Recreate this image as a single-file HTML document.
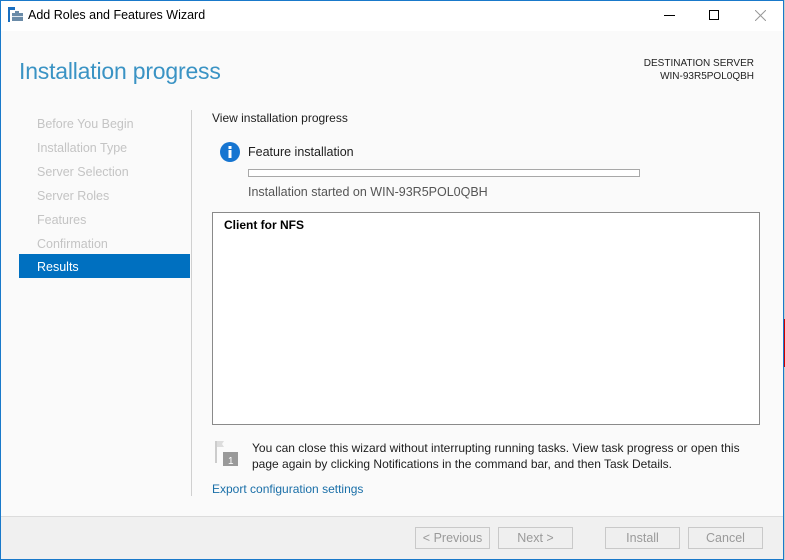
<!DOCTYPE html>
<html><head><style>
*{margin:0;padding:0;box-sizing:border-box}
body{width:785px;height:560px;overflow:hidden;background:#fff;font-family:"Liberation Sans",sans-serif;position:relative;font-size:12px;color:#1e1e1e}
.a{position:absolute}
.win{left:0;top:0;width:784px;height:560px;border:1px solid #1979ca;background:#fafafa}
.title{left:1px;top:1px;width:782px;height:30px;background:#fff}
.nav{left:37px;color:#c4c4c4;font-size:12.5px}
.btn{top:527px;height:22px;border:1px solid #c9c9c9;background:#efefef;color:#9a9a9a;text-align:center;line-height:20px;font-size:12.5px}
</style></head><body>
<div class="a win"></div>
<div class="a title"></div>
<div class="a" style="left:784px;top:0;width:1px;height:560px;background:#ccc"></div>
<div class="a" style="left:784px;top:319px;width:1px;height:48px;background:#c00"></div>
<svg class="a" style="left:8px;top:7px" width="16" height="16" viewBox="0 0 16 16"><rect x="0" y="0" width="2" height="15" fill="#1a6fc0"/><rect x="0" y="0" width="7" height="3" fill="#1a6fc0"/><rect x="4" y="6" width="11" height="8" fill="#6a8ba8"/><rect x="7" y="4" width="4" height="2" fill="#6a8ba8"/><rect x="4" y="9" width="11" height="1" fill="#dfe7ee"/></svg>
<div class="a" style="left:28px;top:8px;font-size:12.5px;color:#000">Add Roles and Features Wizard</div>
<div class="a" style="left:664px;top:15px;width:11px;height:1px;background:#000"></div>
<div class="a" style="left:709px;top:10px;width:10px;height:10px;border:1px solid #000"></div>
<svg class="a" style="left:755px;top:10px" width="11" height="11"><path d="M0 0L11 11M11 0L0 11" stroke="#999" stroke-width="1"/></svg>
<div class="a" style="left:19px;top:58px;font-size:23px;color:#3a93c4;letter-spacing:-0.2px">Installation progress</div>
<div class="a" style="right:31px;top:57px;font-size:10px;text-align:right;line-height:13px;color:#222">DESTINATION SERVER<br>WIN-93R5POL0QBH</div>
<div class="a nav" style="top:117px">Before You Begin</div>
<div class="a nav" style="top:141px">Installation Type</div>
<div class="a nav" style="top:165px">Server Selection</div>
<div class="a nav" style="top:189px">Server Roles</div>
<div class="a nav" style="top:213px">Features</div>
<div class="a nav" style="top:237px">Confirmation</div>
<div class="a" style="left:19px;top:254px;width:171px;height:24px;background:#0070c0;color:#fff;font-size:12.5px;padding:6px 0 0 18px">Results</div>
<div class="a" style="left:191px;top:110px;width:1px;height:386px;background:#d0d0d0"></div>
<div class="a" style="left:212px;top:111px;font-size:12px">View installation progress</div>
<svg class="a" style="left:220px;top:142px" width="20" height="20"><circle cx="10" cy="10" r="10" fill="#1675d1"/><rect x="8.5" y="8" width="3" height="8" fill="#fff"/><rect x="8.5" y="4" width="3" height="3" fill="#fff"/></svg>
<div class="a" style="left:248px;top:145px;font-size:12.5px">Feature installation</div>
<div class="a" style="left:248px;top:169px;width:392px;height:8px;border:1px solid #a8a8a8;background:#fff"></div>
<div class="a" style="left:248px;top:185px;font-size:12.5px;color:#555">Installation started on WIN-93R5POL0QBH</div>
<div class="a" style="left:212px;top:212px;width:548px;height:213px;border:1px solid #8a8a8a;background:#fff"></div>
<div class="a" style="left:224px;top:218px;font-weight:bold;font-size:12px;color:#000">Client for NFS</div>
<svg class="a" style="left:215px;top:440px" width="24" height="27"><path d="M1 1V23" stroke="#ccc" stroke-width="2"/><path d="M2 1H9L7 4L9 7H2Z" fill="#ddd"/><rect x="8" y="12" width="15" height="14" fill="#999"/><text x="13" y="24" font-size="10" fill="#fff" font-family="Liberation Sans">1</text></svg>
<div class="a" style="left:252px;top:440px;width:500px;font-size:12px;line-height:16px">You can close this wizard without interrupting running tasks. View task progress or open this page again by clicking Notifications in the command bar, and then Task Details.</div>
<div class="a" style="left:212px;top:482px;color:#1a6fa8;font-size:12px">Export configuration settings</div>
<div class="a" style="left:1px;top:516px;width:782px;height:43px;background:#f0f0f0;border-top:1px solid #dcdcdc"></div>
<div class="a btn" style="left:415px;width:75px">&lt; Previous</div>
<div class="a btn" style="left:498px;width:75px">Next &gt;</div>
<div class="a btn" style="left:605px;width:75px">Install</div>
<div class="a btn" style="left:688px;width:75px">Cancel</div>
</body></html>
